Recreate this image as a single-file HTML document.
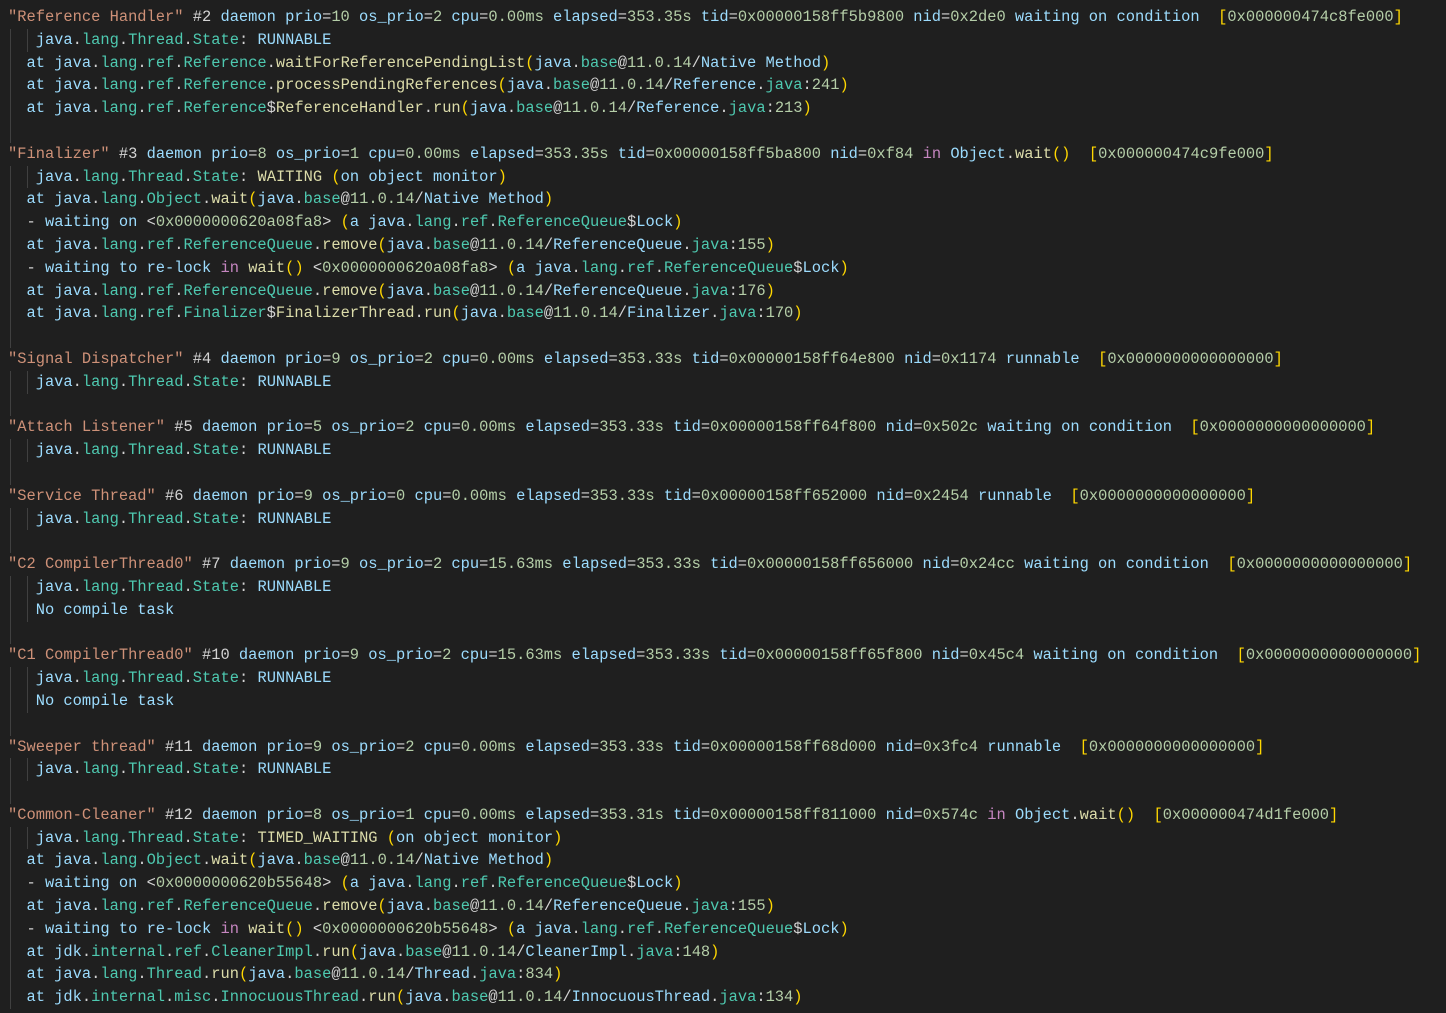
<!DOCTYPE html>
<html><head><meta charset="utf-8"><style>
html,body{margin:0;padding:0;background:#1f1f1f;width:1446px;height:1013px;overflow:hidden}
#c{padding-top:6px;font-family:"Liberation Mono",monospace;font-size:15.4px;color:#9cdcfe}
.l{height:22.8px;line-height:22.8px;white-space:pre;padding-left:8px}
.i{background:linear-gradient(#404040,#404040) 10px 0/1px 100% no-repeat}
.st{background:linear-gradient(#404040,#404040) 10px 0/1px 100% no-repeat,linear-gradient(#404040,#404040) 27px 0/1px 100% no-repeat}
i{font-style:normal}
.s{color:#ce9178}.w{color:#d4d4d4}.n{color:#b5cea8}.t{color:#4ec9b0}.y{color:#dcdcaa}.g{color:#ffd700}.p{color:#c586c0}
</style></head><body><div id="c">
<div class="l"><i class=s>"Reference Handler"</i> <i class=w>#2</i> daemon prio<i class=w>=</i><i class=n>10</i> os_prio<i class=w>=</i><i class=n>2</i> cpu<i class=w>=</i><i class=n>0.00ms</i> elapsed<i class=w>=</i><i class=n>353.35s</i> tid<i class=w>=</i><i class=n>0x00000158ff5b9800</i> nid<i class=w>=</i><i class=n>0x2de0</i> waiting on condition  <i class=g>[</i><i class=n>0x000000474c8fe000</i><i class=g>]</i></div>
<div class="l st">   java<i class=w>.</i><i class=t>lang</i><i class=w>.</i><i class=t>Thread</i><i class=w>.</i><i class=t>State</i><i class=w>:</i> RUNNABLE</div>
<div class="l i">  at java<i class=w>.</i><i class=t>lang</i><i class=w>.</i><i class=t>ref</i><i class=w>.</i><i class=t>Reference</i><i class=w>.</i><i class=y>waitForReferencePendingList</i><i class=g>(</i>java<i class=w>.</i><i class=t>base</i><i class=w>@</i><i class=n>11.0.14</i><i class=w>/</i>Native Method<i class=g>)</i></div>
<div class="l i">  at java<i class=w>.</i><i class=t>lang</i><i class=w>.</i><i class=t>ref</i><i class=w>.</i><i class=t>Reference</i><i class=w>.</i><i class=y>processPendingReferences</i><i class=g>(</i>java<i class=w>.</i><i class=t>base</i><i class=w>@</i><i class=n>11.0.14</i><i class=w>/</i>Reference<i class=w>.</i><i class=t>java</i><i class=w>:</i><i class=n>241</i><i class=g>)</i></div>
<div class="l i">  at java<i class=w>.</i><i class=t>lang</i><i class=w>.</i><i class=t>ref</i><i class=w>.</i><i class=t>Reference</i><i class=w>$</i><i class=y>ReferenceHandler</i><i class=w>.</i><i class=y>run</i><i class=g>(</i>java<i class=w>.</i><i class=t>base</i><i class=w>@</i><i class=n>11.0.14</i><i class=w>/</i>Reference<i class=w>.</i><i class=t>java</i><i class=w>:</i><i class=n>213</i><i class=g>)</i></div>
<div class="l i"> </div>
<div class="l"><i class=s>"Finalizer"</i> <i class=w>#3</i> daemon prio<i class=w>=</i><i class=n>8</i> os_prio<i class=w>=</i><i class=n>1</i> cpu<i class=w>=</i><i class=n>0.00ms</i> elapsed<i class=w>=</i><i class=n>353.35s</i> tid<i class=w>=</i><i class=n>0x00000158ff5ba800</i> nid<i class=w>=</i><i class=n>0xf84</i> <i class=p>in</i> Object<i class=w>.</i><i class=y>wait</i><i class=g>()</i>  <i class=g>[</i><i class=n>0x000000474c9fe000</i><i class=g>]</i></div>
<div class="l st">   java<i class=w>.</i><i class=t>lang</i><i class=w>.</i><i class=t>Thread</i><i class=w>.</i><i class=t>State</i><i class=w>:</i> <i class=y>WAITING</i> <i class=g>(</i>on object monitor<i class=g>)</i></div>
<div class="l i">  at java<i class=w>.</i><i class=t>lang</i><i class=w>.</i><i class=t>Object</i><i class=w>.</i><i class=y>wait</i><i class=g>(</i>java<i class=w>.</i><i class=t>base</i><i class=w>@</i><i class=n>11.0.14</i><i class=w>/</i>Native Method<i class=g>)</i></div>
<div class="l i">  <i class=w>-</i> waiting on <i class=w>&lt;</i><i class=n>0x0000000620a08fa8</i><i class=w>&gt;</i> <i class=g>(</i>a java<i class=w>.</i><i class=t>lang</i><i class=w>.</i><i class=t>ref</i><i class=w>.</i><i class=t>ReferenceQueue</i><i class=w>$</i>Lock<i class=g>)</i></div>
<div class="l i">  at java<i class=w>.</i><i class=t>lang</i><i class=w>.</i><i class=t>ref</i><i class=w>.</i><i class=t>ReferenceQueue</i><i class=w>.</i><i class=y>remove</i><i class=g>(</i>java<i class=w>.</i><i class=t>base</i><i class=w>@</i><i class=n>11.0.14</i><i class=w>/</i>ReferenceQueue<i class=w>.</i><i class=t>java</i><i class=w>:</i><i class=n>155</i><i class=g>)</i></div>
<div class="l i">  <i class=w>-</i> waiting to re-lock <i class=p>in</i> <i class=y>wait</i><i class=g>()</i> <i class=w>&lt;</i><i class=n>0x0000000620a08fa8</i><i class=w>&gt;</i> <i class=g>(</i>a java<i class=w>.</i><i class=t>lang</i><i class=w>.</i><i class=t>ref</i><i class=w>.</i><i class=t>ReferenceQueue</i><i class=w>$</i>Lock<i class=g>)</i></div>
<div class="l i">  at java<i class=w>.</i><i class=t>lang</i><i class=w>.</i><i class=t>ref</i><i class=w>.</i><i class=t>ReferenceQueue</i><i class=w>.</i><i class=y>remove</i><i class=g>(</i>java<i class=w>.</i><i class=t>base</i><i class=w>@</i><i class=n>11.0.14</i><i class=w>/</i>ReferenceQueue<i class=w>.</i><i class=t>java</i><i class=w>:</i><i class=n>176</i><i class=g>)</i></div>
<div class="l i">  at java<i class=w>.</i><i class=t>lang</i><i class=w>.</i><i class=t>ref</i><i class=w>.</i><i class=t>Finalizer</i><i class=w>$</i><i class=y>FinalizerThread</i><i class=w>.</i><i class=y>run</i><i class=g>(</i>java<i class=w>.</i><i class=t>base</i><i class=w>@</i><i class=n>11.0.14</i><i class=w>/</i>Finalizer<i class=w>.</i><i class=t>java</i><i class=w>:</i><i class=n>170</i><i class=g>)</i></div>
<div class="l i"> </div>
<div class="l"><i class=s>"Signal Dispatcher"</i> <i class=w>#4</i> daemon prio<i class=w>=</i><i class=n>9</i> os_prio<i class=w>=</i><i class=n>2</i> cpu<i class=w>=</i><i class=n>0.00ms</i> elapsed<i class=w>=</i><i class=n>353.33s</i> tid<i class=w>=</i><i class=n>0x00000158ff64e800</i> nid<i class=w>=</i><i class=n>0x1174</i> runnable  <i class=g>[</i><i class=n>0x0000000000000000</i><i class=g>]</i></div>
<div class="l st">   java<i class=w>.</i><i class=t>lang</i><i class=w>.</i><i class=t>Thread</i><i class=w>.</i><i class=t>State</i><i class=w>:</i> RUNNABLE</div>
<div class="l i"> </div>
<div class="l"><i class=s>"Attach Listener"</i> <i class=w>#5</i> daemon prio<i class=w>=</i><i class=n>5</i> os_prio<i class=w>=</i><i class=n>2</i> cpu<i class=w>=</i><i class=n>0.00ms</i> elapsed<i class=w>=</i><i class=n>353.33s</i> tid<i class=w>=</i><i class=n>0x00000158ff64f800</i> nid<i class=w>=</i><i class=n>0x502c</i> waiting on condition  <i class=g>[</i><i class=n>0x0000000000000000</i><i class=g>]</i></div>
<div class="l st">   java<i class=w>.</i><i class=t>lang</i><i class=w>.</i><i class=t>Thread</i><i class=w>.</i><i class=t>State</i><i class=w>:</i> RUNNABLE</div>
<div class="l i"> </div>
<div class="l"><i class=s>"Service Thread"</i> <i class=w>#6</i> daemon prio<i class=w>=</i><i class=n>9</i> os_prio<i class=w>=</i><i class=n>0</i> cpu<i class=w>=</i><i class=n>0.00ms</i> elapsed<i class=w>=</i><i class=n>353.33s</i> tid<i class=w>=</i><i class=n>0x00000158ff652000</i> nid<i class=w>=</i><i class=n>0x2454</i> runnable  <i class=g>[</i><i class=n>0x0000000000000000</i><i class=g>]</i></div>
<div class="l st">   java<i class=w>.</i><i class=t>lang</i><i class=w>.</i><i class=t>Thread</i><i class=w>.</i><i class=t>State</i><i class=w>:</i> RUNNABLE</div>
<div class="l i"> </div>
<div class="l"><i class=s>"C2 CompilerThread0"</i> <i class=w>#7</i> daemon prio<i class=w>=</i><i class=n>9</i> os_prio<i class=w>=</i><i class=n>2</i> cpu<i class=w>=</i><i class=n>15.63ms</i> elapsed<i class=w>=</i><i class=n>353.33s</i> tid<i class=w>=</i><i class=n>0x00000158ff656000</i> nid<i class=w>=</i><i class=n>0x24cc</i> waiting on condition  <i class=g>[</i><i class=n>0x0000000000000000</i><i class=g>]</i></div>
<div class="l st">   java<i class=w>.</i><i class=t>lang</i><i class=w>.</i><i class=t>Thread</i><i class=w>.</i><i class=t>State</i><i class=w>:</i> RUNNABLE</div>
<div class="l st">   No compile task</div>
<div class="l i"> </div>
<div class="l"><i class=s>"C1 CompilerThread0"</i> <i class=w>#10</i> daemon prio<i class=w>=</i><i class=n>9</i> os_prio<i class=w>=</i><i class=n>2</i> cpu<i class=w>=</i><i class=n>15.63ms</i> elapsed<i class=w>=</i><i class=n>353.33s</i> tid<i class=w>=</i><i class=n>0x00000158ff65f800</i> nid<i class=w>=</i><i class=n>0x45c4</i> waiting on condition  <i class=g>[</i><i class=n>0x0000000000000000</i><i class=g>]</i></div>
<div class="l st">   java<i class=w>.</i><i class=t>lang</i><i class=w>.</i><i class=t>Thread</i><i class=w>.</i><i class=t>State</i><i class=w>:</i> RUNNABLE</div>
<div class="l st">   No compile task</div>
<div class="l i"> </div>
<div class="l"><i class=s>"Sweeper thread"</i> <i class=w>#11</i> daemon prio<i class=w>=</i><i class=n>9</i> os_prio<i class=w>=</i><i class=n>2</i> cpu<i class=w>=</i><i class=n>0.00ms</i> elapsed<i class=w>=</i><i class=n>353.33s</i> tid<i class=w>=</i><i class=n>0x00000158ff68d000</i> nid<i class=w>=</i><i class=n>0x3fc4</i> runnable  <i class=g>[</i><i class=n>0x0000000000000000</i><i class=g>]</i></div>
<div class="l st">   java<i class=w>.</i><i class=t>lang</i><i class=w>.</i><i class=t>Thread</i><i class=w>.</i><i class=t>State</i><i class=w>:</i> RUNNABLE</div>
<div class="l i"> </div>
<div class="l"><i class=s>"Common-Cleaner"</i> <i class=w>#12</i> daemon prio<i class=w>=</i><i class=n>8</i> os_prio<i class=w>=</i><i class=n>1</i> cpu<i class=w>=</i><i class=n>0.00ms</i> elapsed<i class=w>=</i><i class=n>353.31s</i> tid<i class=w>=</i><i class=n>0x00000158ff811000</i> nid<i class=w>=</i><i class=n>0x574c</i> <i class=p>in</i> Object<i class=w>.</i><i class=y>wait</i><i class=g>()</i>  <i class=g>[</i><i class=n>0x000000474d1fe000</i><i class=g>]</i></div>
<div class="l st">   java<i class=w>.</i><i class=t>lang</i><i class=w>.</i><i class=t>Thread</i><i class=w>.</i><i class=t>State</i><i class=w>:</i> <i class=y>TIMED_WAITING</i> <i class=g>(</i>on object monitor<i class=g>)</i></div>
<div class="l i">  at java<i class=w>.</i><i class=t>lang</i><i class=w>.</i><i class=t>Object</i><i class=w>.</i><i class=y>wait</i><i class=g>(</i>java<i class=w>.</i><i class=t>base</i><i class=w>@</i><i class=n>11.0.14</i><i class=w>/</i>Native Method<i class=g>)</i></div>
<div class="l i">  <i class=w>-</i> waiting on <i class=w>&lt;</i><i class=n>0x0000000620b55648</i><i class=w>&gt;</i> <i class=g>(</i>a java<i class=w>.</i><i class=t>lang</i><i class=w>.</i><i class=t>ref</i><i class=w>.</i><i class=t>ReferenceQueue</i><i class=w>$</i>Lock<i class=g>)</i></div>
<div class="l i">  at java<i class=w>.</i><i class=t>lang</i><i class=w>.</i><i class=t>ref</i><i class=w>.</i><i class=t>ReferenceQueue</i><i class=w>.</i><i class=y>remove</i><i class=g>(</i>java<i class=w>.</i><i class=t>base</i><i class=w>@</i><i class=n>11.0.14</i><i class=w>/</i>ReferenceQueue<i class=w>.</i><i class=t>java</i><i class=w>:</i><i class=n>155</i><i class=g>)</i></div>
<div class="l i">  <i class=w>-</i> waiting to re-lock <i class=p>in</i> <i class=y>wait</i><i class=g>()</i> <i class=w>&lt;</i><i class=n>0x0000000620b55648</i><i class=w>&gt;</i> <i class=g>(</i>a java<i class=w>.</i><i class=t>lang</i><i class=w>.</i><i class=t>ref</i><i class=w>.</i><i class=t>ReferenceQueue</i><i class=w>$</i>Lock<i class=g>)</i></div>
<div class="l i">  at jdk<i class=w>.</i><i class=t>internal</i><i class=w>.</i><i class=t>ref</i><i class=w>.</i><i class=t>CleanerImpl</i><i class=w>.</i><i class=y>run</i><i class=g>(</i>java<i class=w>.</i><i class=t>base</i><i class=w>@</i><i class=n>11.0.14</i><i class=w>/</i>CleanerImpl<i class=w>.</i><i class=t>java</i><i class=w>:</i><i class=n>148</i><i class=g>)</i></div>
<div class="l i">  at java<i class=w>.</i><i class=t>lang</i><i class=w>.</i><i class=t>Thread</i><i class=w>.</i><i class=y>run</i><i class=g>(</i>java<i class=w>.</i><i class=t>base</i><i class=w>@</i><i class=n>11.0.14</i><i class=w>/</i>Thread<i class=w>.</i><i class=t>java</i><i class=w>:</i><i class=n>834</i><i class=g>)</i></div>
<div class="l i">  at jdk<i class=w>.</i><i class=t>internal</i><i class=w>.</i><i class=t>misc</i><i class=w>.</i><i class=t>InnocuousThread</i><i class=w>.</i><i class=y>run</i><i class=g>(</i>java<i class=w>.</i><i class=t>base</i><i class=w>@</i><i class=n>11.0.14</i><i class=w>/</i>InnocuousThread<i class=w>.</i><i class=t>java</i><i class=w>:</i><i class=n>134</i><i class=g>)</i></div>
</div></body></html>
